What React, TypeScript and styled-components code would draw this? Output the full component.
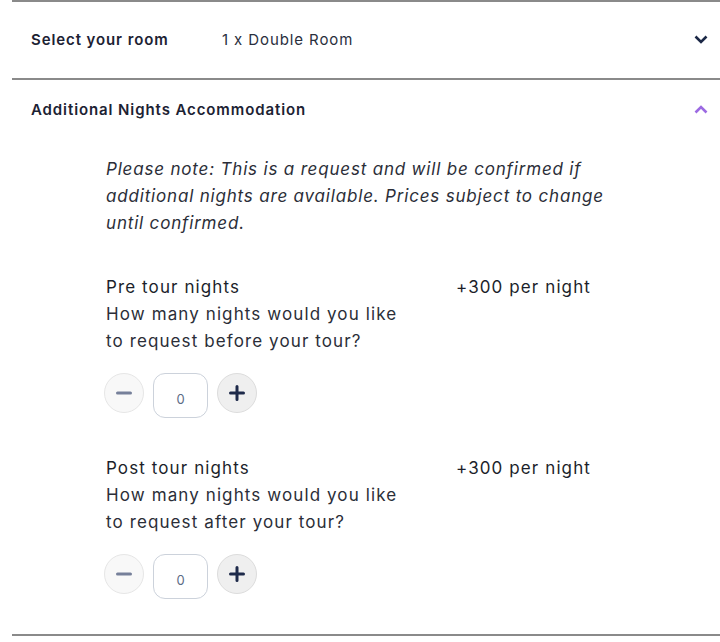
import React, { useState } from "react";
import styled, { createGlobalStyle } from "styled-components";

const GlobalStyle = createGlobalStyle`
  * { box-sizing: border-box; }
  body {
    margin: 0;
    background: #ffffff;
    font-family: Inter, "Noto Sans", sans-serif;
    color: #1c1f2b;
  }
`;

const Page = styled.div`
  padding-left: 12px;
  width: 720px;
`;

const Section = styled.section`
  border-top: 2px solid #8a8a8a;
`;

const LastRule = styled.div`
  border-top: 2px solid #8a8a8a;
`;

const Header = styled.div<{ $h: number; $lift?: number }>`
  display: flex;
  align-items: center;
  height: ${(p) => p.$h}px;
  padding: 0 12px ${(p) => p.$lift ?? 0}px 19px;
`;

const HeaderLabel = styled.div<{ $w?: number }>`
  font-size: 15px;
  font-weight: 600;
  letter-spacing: 0.06em;
  color: #1c2233;
  ${(p) => (p.$w ? `width: ${p.$w}px; flex: none;` : "")}
`;

const HeaderValue = styled.div`
  flex: 1;
  font-size: 15px;
  font-weight: 400;
  letter-spacing: 0.06em;
  color: #2a2f3d;
`;

const Chevron = styled.svg`
  margin-left: auto;
  flex: none;
`;

const Body = styled.div`
  padding: 18px 0 35px 94px;
`;

const Note = styled.p`
  margin: 0;
  max-width: 505px;
  font-size: 17px;
  font-style: italic;
  line-height: 27px;
  letter-spacing: 0.048em;
  color: #2b2e38;
`;

const Option = styled.div<{ $top: number }>`
  margin-top: ${(p) => p.$top}px;
`;

const OptionGrid = styled.div`
  display: grid;
  grid-template-columns: 350px auto;
  font-size: 17px;
  line-height: 27px;
  letter-spacing: 0.065em;
`;

const OptionTitle = styled.div`
  color: #1c1f2b;
`;

const OptionPrice = styled.div`
  color: #1c1f2b;
`;

const OptionDesc = styled.div`
  grid-column: 1;
  max-width: 305px;
  color: #2b2e38;
`;

const Stepper = styled.div`
  display: flex;
  align-items: flex-start;
  gap: 9px;
  margin: 18px 0 0 -2px;
`;

const RoundButton = styled.button<{ $strong?: boolean }>`
  width: 40px;
  height: 40px;
  border-radius: 50%;
  border: 1px solid ${(p) => (p.$strong ? "#dcdcdc" : "#e6e6e6")};
  background: ${(p) => (p.$strong ? "#efefef" : "#f8f8f8")};
  display: flex;
  align-items: center;
  justify-content: center;
  padding: 0;
  cursor: pointer;
`;

const CountBox = styled.input`
  width: 55px;
  height: 45px;
  border: 1px solid #ccd2db;
  border-radius: 12px;
  background: #fff;
  text-align: center;
  font-family: Inter, "Noto Sans", sans-serif;
  font-size: 13px;
  color: #5c6b86;
  padding: 6px 0 0;
  outline: none;
`;

function Minus() {
  return (
    <svg width="16" height="16" viewBox="0 0 16 16">
      <path d="M1.5 8h13" stroke="#76809a" strokeWidth="3" strokeLinecap="round" />
    </svg>
  );
}

function Plus() {
  return (
    <svg width="16" height="16" viewBox="0 0 16 16">
      <path d="M1.5 8h13M8 1.5v13" stroke="#1e2a4a" strokeWidth="3" strokeLinecap="round" />
    </svg>
  );
}

function Counter() {
  const [n, setN] = useState(0);
  return (
    <Stepper>
      <RoundButton aria-label="decrease" onClick={() => setN(Math.max(0, n - 1))}>
        <Minus />
      </RoundButton>
      <CountBox value={n} readOnly />
      <RoundButton $strong aria-label="increase" onClick={() => setN(n + 1)}>
        <Plus />
      </RoundButton>
    </Stepper>
  );
}

function NightOption({ title, when, top }: { title: string; when: string; top: number }) {
  return (
    <Option $top={top}>
      <OptionGrid>
        <OptionTitle>{title}</OptionTitle>
        <OptionPrice>+300 per night</OptionPrice>
        <OptionDesc>How many nights would you like to request {when} your tour?</OptionDesc>
      </OptionGrid>
      <Counter />
    </Option>
  );
}

export default function App() {
  return (
    <>
      <GlobalStyle />
      <Page>
        <Section>
          <Header $h={76} $lift={2}>
            <HeaderLabel $w={191}>Select your room</HeaderLabel>
            <HeaderValue>1 x Double Room</HeaderValue>
            <Chevron width="14" height="9" viewBox="0 0 14 9">
              <path d="M1.5 1.5l5.5 5.5 5.5-5.5" fill="none" stroke="#1b2846" strokeWidth="2.6" />
            </Chevron>
          </Header>
        </Section>
        <Section>
          <Header $h={58}>
            <HeaderLabel>Additional Nights Accommodation</HeaderLabel>
            <Chevron width="14" height="9" viewBox="0 0 14 9">
              <path d="M1.5 7.5l5.5-5.5 5.5 5.5" fill="none" stroke="#9c6ae2" strokeWidth="2.6" />
            </Chevron>
          </Header>
          <Body>
            <Note>
              Please note: This is a request and will be confirmed if additional nights are available. Prices
              subject to change until confirmed.
            </Note>
            <NightOption title="Pre tour nights" when="before" top={37} />
            <NightOption title="Post tour nights" when="after" top={37} />
          </Body>
        </Section>
        <LastRule />
      </Page>
    </>
  );
}
